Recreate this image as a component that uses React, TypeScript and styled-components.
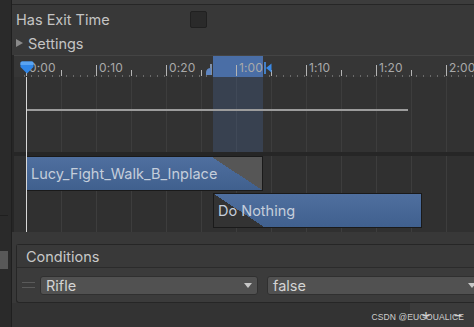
import React from "react";
import styled, { createGlobalStyle } from "styled-components";

const ORIGIN = 12; // px from timeline left to time 0
const MAJOR = 70; // px between labelled ticks

const labels = ["0:00", "0:10", "0:20", "1:00", "1:10", "1:20", "2:00"];

const GlobalStyle = createGlobalStyle`
  html, body {
    margin: 0;
    padding: 0;
    background: #383838;
    overflow: hidden;
  }
  body {
    font-family: Inter, "Noto Sans", "DejaVu Sans", sans-serif;
    color: #c4c4c4;
  }
`;

const Window = styled.div`
  display: flex;
  width: 474px;
  height: 327px;
  overflow: hidden;
  background: #383838;
`;

const LeftStrip = styled.div`
  width: 11px;
  flex: none;
  background: #2a2a2a;
  border-right: 1px solid #1f1f1f;
  display: flex;
  flex-direction: column;
`;

const StripBlock = styled.div<{ $top: number; $h: number; $bg: string }>`
  margin-top: ${(p) => p.$top}px;
  height: ${(p) => p.$h}px;
  width: 8px;
  background: ${(p) => p.$bg};
`;

const Main = styled.div`
  flex: 1;
  display: flex;
  flex-direction: column;
  min-width: 0;
`;

const TopRule = styled.div`
  height: 4px;
  background: #3c3c3c;
  border-bottom: 1px solid #262626;
`;

const FieldRow = styled.div`
  height: 28px;
  display: flex;
  align-items: center;
  padding-left: 4px;
  font-size: 14.5px;
`;

const FieldLabel = styled.span`
  width: 174px;
`;

const Checkbox = styled.div`
  width: 15px;
  height: 15px;
  border-radius: 2px;
  background: #2a2a2a;
  border: 1px solid #202020;
`;

const Foldout = styled.div`
  height: 20px;
  display: flex;
  align-items: center;
  gap: 4px;
  padding-left: 4px;
  font-size: 14.5px;
  &::before {
    content: "";
    border-left: 7px solid #8a8a8a;
    border-top: 4.5px solid transparent;
    border-bottom: 4.5px solid transparent;
    margin-right: 1px;
  }
`;

const Timeline = styled.div`
  margin-top: 2px;
  position: relative;
  display: flex;
  flex-direction: column;
  border-left: 2px solid #262626;
  overflow: hidden;
`;

const Ruler = styled.div`
  height: 21px;
  position: relative;
  background: #363636;
  border-top: 1px solid #444;
  background-image: repeating-linear-gradient(
    to right,
    #6a6a6a 0 1px,
    transparent 1px 7px
  );
  background-size: 100% 2px;
  background-position: ${ORIGIN - 2}px bottom;
  background-repeat: no-repeat;
`;

const Tick = styled.div<{ $major?: boolean }>`
  position: absolute;
  bottom: 1px;
  width: 1px;
  height: ${(p) => (p.$major ? 11 : 6)}px;
  background: #b4b4b4;
`;

const TickLabel = styled.span`
  position: absolute;
  top: 4px;
  font-size: 12px;
  color: #a9a9a9;
  letter-spacing: 0.1px;
  white-space: nowrap;
`;

const SelectionHead = styled.div`
  position: absolute;
  top: 0;
  height: 100%;
  background: #4a6ea6;
`;

const SelectionBody = styled.div`
  position: absolute;
  top: 0;
  height: 100%;
  background: rgba(75, 112, 170, 0.25);
`;

const Tracks = styled.div`
  display: flex;
  flex-direction: column;
  position: relative;
`;

const CurveTrack = styled.div`
  height: 75px;
  position: relative;
  background: #323232;
`;

const GridLine = styled.div`
  position: absolute;
  top: 0;
  bottom: 0;
  width: 1px;
  background: #3d3d3d;
`;

const Curve = styled.div`
  position: absolute;
  top: 32px;
  height: 2px;
  background: #9c9c9c;
`;

const TrackDivider = styled.div`
  height: 4px;
  background: #262626;
`;

const TransitionTrack = styled.div`
  height: 76px;
  position: relative;
  background: #303030;
`;

const Clip = styled.div<{ $kind: "from" | "to" }>`
  position: absolute;
  height: 35px;
  box-sizing: border-box;
  border: 1px solid #1a1a1a;
  display: flex;
  align-items: center;
  padding-left: 4px;
  font-size: 14.5px;
  color: #c5cedb;
  white-space: nowrap;
  background: ${(p) =>
    p.$kind === "from"
      ? `linear-gradient(to top right, transparent 50%, #565656 50%) right / 50px 100% no-repeat,
         linear-gradient(#4f6f9f, #40608e)`
      : `linear-gradient(to top right, #333333 50%, transparent 50%) left / 50px 100% no-repeat,
         linear-gradient(#4f6f9f, #40608e)`};
`;

const Playhead = styled.div`
  position: absolute;
  top: 22px;
  bottom: 0;
  width: 1px;
  background: #d8d8d8;
`;

const MarkerIcon = styled.svg`
  position: absolute;
`;

const Gap = styled.div`
  height: 12px;
`;

const Panel = styled.div`
  margin-left: 4px;
  border: 1px solid #262626;
  border-right: none;
  border-radius: 3px 0 0 3px;
  background: #3b3b3b;
  display: flex;
  flex-direction: column;
`;

const PanelHeader = styled.div`
  height: 22px;
  display: flex;
  align-items: center;
  padding-left: 9px;
  font-size: 14.5px;
  color: #c8c8c8;
  background: #393939;
  border-bottom: 1px solid #2b2b2b;
`;

const ConditionRow = styled.div`
  height: 34px;
  display: flex;
  align-items: center;
  gap: 5px;
  padding-left: 5px;
`;

const Handle = styled.div`
  width: 13px;
  flex: none;
  height: 4px;
  border-top: 1px solid #5a5a5a;
  border-bottom: 1px solid #5a5a5a;
`;

const Dropdown = styled.div<{ $width: number; $offset?: number }>`
  width: ${(p) => p.$width}px;
  margin-left: ${(p) => p.$offset ?? 0}px;
  flex: none;
  height: 19px;
  box-sizing: border-box;
  display: flex;
  align-items: center;
  justify-content: space-between;
  padding: 0 5px 0 5px;
  border-radius: 3px;
  background: #515151;
  border: 1px solid #303030;
  font-size: 14.5px;
  color: #d4d4d4;
  &::after {
    content: "";
    border-top: 5px solid #c8c8c8;
    border-left: 4px solid transparent;
    border-right: 4px solid transparent;
  }
`;

const Footer = styled.div`
  flex: 1;
  display: flex;
  justify-content: flex-end;
  background: #333;
  position: relative;
`;

const FooterTab = styled.div`
  width: 64px;
  background: #3b3b3b;
  display: flex;
  align-items: flex-start;
  justify-content: center;
  gap: 22px;
  padding-top: 2px;
  font-size: 15px;
  color: #c8c8c8;
`;

const Watermark = styled.span`
  position: absolute;
  right: 10px;
  bottom: 5px;
  font-family: "Liberation Sans", Arial, sans-serif;
  font-size: 8.5px;
  color: rgba(235, 235, 235, 0.85);
  letter-spacing: 0.1px;
`;

export default function App() {
  const majors = labels.map((_, i) => ORIGIN + i * MAJOR);
  const minors = labels.map((_, i) => ORIGIN + MAJOR / 2 + i * MAJOR);
  const grid = [...majors, ...minors].filter((x) => x > ORIGIN);
  const selLeft = ORIGIN + 187;
  const selWidth = 50;

  return (
    <Window>
      <GlobalStyle />
      <LeftStrip>
        <StripBlock $top={215} $h={1} $bg="#1f1f1f" />
        <StripBlock $top={35} $h={18} $bg="#585858" />
      </LeftStrip>
      <Main>
        <TopRule />
        <FieldRow>
          <FieldLabel>Has Exit Time</FieldLabel>
          <Checkbox />
        </FieldRow>
        <Foldout>Settings</Foldout>
        <Timeline>
          <Ruler>
            <SelectionHead style={{ left: selLeft, width: selWidth }} />
            {majors.map((x, i) => (
              <React.Fragment key={x}>
                <Tick $major style={{ left: x }} />
                <TickLabel style={{ left: x + 3 }}>{labels[i]}</TickLabel>
              </React.Fragment>
            ))}
            {minors.map((x) => (
              <Tick key={x} style={{ left: x }} />
            ))}
          </Ruler>
          <Tracks>
            <CurveTrack>
              {grid.map((x) => (
                <GridLine key={x} style={{ left: x }} />
              ))}
              <SelectionBody style={{ left: selLeft, width: selWidth }} />
              <Curve style={{ left: ORIGIN, width: 382 }} />
            </CurveTrack>
            <TrackDivider />
            <TransitionTrack>
              {grid.map((x) => (
                <GridLine key={x} style={{ left: x }} />
              ))}
              <Clip $kind="from" style={{ left: ORIGIN, top: 0, width: 237 }}>
                Lucy_Fight_Walk_B_Inplace
              </Clip>
              <Clip $kind="to" style={{ left: selLeft, top: 37, width: 209 }}>
                Do Nothing
              </Clip>
            </TransitionTrack>
          </Tracks>
          <Playhead style={{ left: ORIGIN }} />
          {/* playhead handle */}
          <MarkerIcon
            width="14"
            height="13"
            viewBox="0 0 14 13"
            style={{ left: ORIGIN - 6, top: 6 }}
          >
            <path
              d="M2 0.5 H12 Q13.5 0.5 13.5 2 V6 L7 12.5 L0.5 6 V2 Q0.5 0.5 2 0.5 Z"
              fill="#2f86e8"
            />
            <path d="M2 0.5 H12 Q13.5 0.5 13.5 2 V4 H0.5 V2 Q0.5 0.5 2 0.5 Z" fill="#5aa4f2" />
          </MarkerIcon>
          {/* transition start marker */}
          <MarkerIcon
            width="7"
            height="11"
            viewBox="0 0 7 11"
            style={{ left: selLeft - 8, top: 9 }}
          >
            <path d="M6 0 V11" stroke="#9fb8dc" strokeWidth="1.4" />
            <path d="M6 4 Q1 4 1 9 V11 H6 Z" fill="#5f86c2" />
          </MarkerIcon>
          {/* transition end marker */}
          <MarkerIcon
            width="8"
            height="12"
            viewBox="0 0 8 12"
            style={{ left: selLeft + selWidth + 1, top: 7 }}
          >
            <path d="M1 0 V12" stroke="#4a94ea" strokeWidth="1.6" />
            <path d="M7.5 1.5 L2 6 L7.5 10.5 Z" fill="#3b8ae6" />
          </MarkerIcon>
        </Timeline>
        <Gap />
        <Panel>
          <PanelHeader>Conditions</PanelHeader>
          <ConditionRow>
            <Handle />
            <Dropdown $width={218}>Rifle</Dropdown>
            <Dropdown $width={215} $offset={4}>
              false
            </Dropdown>
          </ConditionRow>
        </Panel>
        <Footer>
          <FooterTab>
            <span>+</span>
            <span>−</span>
          </FooterTab>
          <Watermark>CSDN @EUGOUALICE</Watermark>
        </Footer>
      </Main>
    </Window>
  );
}
